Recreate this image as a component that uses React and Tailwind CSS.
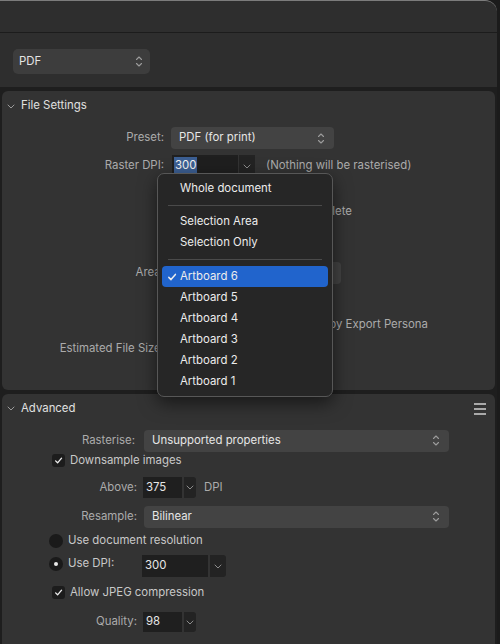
import React from 'react'

// up/down arrows for popup selects
const UpDown = () => (
  <svg width="8" height="13" viewBox="0 0 8 13" fill="none" stroke="#9c9c9c" strokeWidth="1.1" strokeLinecap="round" strokeLinejoin="round">
    <path d="M1.5 4.5 4 2l2.5 2.5" />
    <path d="M1.5 8.5 4 11l2.5-2.5" />
  </svg>
)

const Chev = () => (
  <svg width="8" height="5" viewBox="0 0 8 5" fill="none" stroke="#8c8c8c" strokeWidth="1" strokeLinecap="round" strokeLinejoin="round">
    <path d="M1 1l3 3 3-3" />
  </svg>
)

const Disclosure = () => (
  <svg width="8" height="5" viewBox="0 0 8 5" fill="none" stroke="#9a9a9a" strokeWidth="1" strokeLinecap="round" strokeLinejoin="round">
    <path d="M1 1l3 3 3-3" />
  </svg>
)

const Tick = ({ size = 9 }) => (
  <svg width={size} height={size} viewBox="0 0 10 10" fill="none" stroke="#ededed" strokeWidth="1.5" strokeLinecap="round" strokeLinejoin="round">
    <path d="M1.8 5.4 4 7.6 8.4 2.4" />
  </svg>
)

const Check = () => (
  <div className="flex h-[13px] w-[13px] items-center justify-center rounded-[3px] bg-[#1c1c1c]">
    <Tick />
  </div>
)

const Select = ({ value, className }) => (
  <div className={`flex h-[22px] items-center justify-between rounded-[4px] bg-[#434343] pl-[8px] pr-[9px] text-[#e6e6e6] ${className}`}>
    <span>{value}</span>
    <UpDown />
  </div>
)

const Artboards = ['Artboard 5', 'Artboard 4', 'Artboard 3', 'Artboard 2', 'Artboard 1']

export default function App() {
  return (
    <div className="relative h-[644px] w-[500px] overflow-hidden bg-[#1b1b1b] font-['Inter','Noto_Sans',sans-serif] text-[11.4px]">
      <div className="flex h-full w-[497px] flex-col rounded-tr-[12px] border-t border-[#7c7c7c] bg-[#2e2e2e]">
        {/* title band */}
        <div className="h-[32px] shrink-0 border-b border-[#1c1c1c]" />

        {/* format */}
        <div className="h-[54px] shrink-0 pl-[13px] pt-[16px]">
          <div className="flex h-[25px] w-[137px] items-center justify-between rounded-[5px] bg-[#3d3d3d] pl-[6px] pr-[7px] text-[#e4e4e4]">
            <span>PDF</span>
            <UpDown />
          </div>
        </div>

        <div className="flex flex-1 flex-col gap-[4px] bg-[#1e1e1e] px-[2px] pt-[4px]">
          {/* File Settings */}
          <div className="h-[299px] shrink-0 rounded-[6px] bg-[#333333]">
            <div className="flex h-[30px] items-center gap-[6px] pl-[5px] text-[#e0e0e0]">
              <Disclosure />
              <span>File Settings</span>
            </div>

            <div className="mt-[6px] flex h-[22px] items-center">
              <span className="w-[162px] text-right text-[#ababab]">Preset:</span>
              <Select value="PDF (for print)" className="ml-[7px] w-[163px]" />
            </div>

            <div className="mt-[6px] flex h-[22px] items-center">
              <span className="w-[162px] text-right text-[#ababab]">Raster DPI:</span>
              <div className="ml-[8px] flex h-[22px] w-[66px] items-center bg-[#1f1f1f] pl-[2px]">
                <span className="bg-[#3c5f93] px-[1px] text-[#f2f2f2]">300</span>
              </div>
              <div className="ml-[1px] flex h-[22px] w-[16px] items-center justify-center bg-[#232323]">
                <Chev />
              </div>
              <span className="ml-[11px] text-[#ababab]">(Nothing will be rasterised)</span>
            </div>

            <div className="mt-[27px] flex h-[16px] w-[350px] items-center justify-end whitespace-nowrap text-[#ababab]">
              <span>Include when incomplete</span>
            </div>

            <div className="mt-[42px] flex h-[21px] items-center">
              <span className="w-[162px] text-right text-[#ababab]">Area:</span>
              <Select value="" className="ml-[7px] h-[21px] w-[170px]" />
            </div>

            <div className="mt-[34px] flex h-[16px] w-[426px] items-center justify-end whitespace-nowrap text-[#ababab]">
              <span>Exclude layers hidden by Export Persona</span>
            </div>

            <div className="mt-[8px] flex h-[16px] items-center">
              <span className="w-[162px] text-right text-[#ababab]">Estimated File Size:</span>
            </div>
          </div>

          {/* Advanced */}
          <div className="flex-1 rounded-t-[6px] bg-[#333333]">
            <div className="flex h-[30px] items-center justify-between pl-[5px] pr-[9px] text-[#e0e0e0]">
              <div className="flex items-center gap-[6px]">
                <Disclosure />
                <span>Advanced</span>
              </div>
              <div className="flex w-[12px] flex-col gap-[3px]">
                <div className="h-[2px] bg-[#a9a9a9]" />
                <div className="h-[2px] bg-[#a9a9a9]" />
                <div className="h-[2px] bg-[#a9a9a9]" />
              </div>
            </div>

            <div className="mt-[6px] flex h-[21px] items-center">
              <span className="w-[133px] text-right text-[#ababab]">Rasterise:</span>
              <Select value="Unsupported properties" className="ml-[9px] h-[21px] w-[305px]" />
            </div>

            <div className="ml-[50px] mt-[3px] flex h-[13px] items-center gap-[5px] text-[#c8c8c8]">
              <Check />
              <span>Downsample images</span>
            </div>

            <div className="mt-[10px] flex h-[21px] items-center">
              <span className="w-[135px] text-right text-[#ababab]">Above:</span>
              <div className="ml-[6px] flex h-[21px] w-[39px] items-center bg-[#1f1f1f] pl-[3px] text-[#e6e6e6]">375</div>
              <div className="ml-[2px] flex h-[21px] w-[12px] items-center justify-center rounded-r-[3px] bg-[#232323]">
                <Chev />
              </div>
              <span className="ml-[8px] text-[#ababab]">DPI</span>
            </div>

            <div className="mt-[8px] flex h-[21px] items-center">
              <span className="w-[135px] text-right text-[#ababab]">Resample:</span>
              <Select value="Bilinear" className="ml-[7px] h-[21px] w-[305px]" />
            </div>

            <div className="ml-[47px] mt-[7px] flex h-[14px] items-center gap-[5px] text-[#c8c8c8]">
              <div className="h-[14px] w-[14px] rounded-full bg-[#1a1a1a]" />
              <span>Use document resolution</span>
            </div>

            <div className="ml-[47px] mt-[7px] flex h-[22px] items-start">
              <div className="mt-[2px] flex h-[14px] w-[93px] items-center gap-[5px] text-[#c8c8c8]">
                <div className="flex h-[14px] w-[14px] items-center justify-center rounded-full bg-[#1a1a1a]">
                  <div className="h-[4px] w-[4px] rounded-full bg-[#e8e8e8]" />
                </div>
                <span>Use DPI:</span>
              </div>
              <div className="flex h-[22px] w-[66px] items-center bg-[#1f1f1f] pl-[3px] text-[#e6e6e6]">300</div>
              <div className="ml-[2px] flex h-[22px] w-[16px] items-center justify-center rounded-r-[3px] bg-[#232323]">
                <Chev />
              </div>
            </div>

            <div className="ml-[50px] mt-[9px] flex h-[13px] items-center gap-[5px] text-[#c8c8c8]">
              <Check />
              <span>Allow JPEG compression</span>
            </div>

            <div className="mt-[13px] flex h-[20px] items-center">
              <span className="w-[135px] text-right text-[#ababab]">Quality:</span>
              <div className="ml-[6px] flex h-[20px] w-[39px] items-center bg-[#1f1f1f] pl-[3px] text-[#e6e6e6]">98</div>
              <div className="ml-[2px] flex h-[20px] w-[12px] items-center justify-center rounded-r-[3px] bg-[#232323]">
                <Chev />
              </div>
            </div>
          </div>
        </div>
      </div>

      {/* Area popup menu */}
      <div className="absolute left-[157px] top-[173px] w-[176px] rounded-[7px] border border-[#575757] bg-[#262626] pb-[4px] pt-[4px] text-[#ececec] shadow-[0_6px_18px_rgba(0,0,0,0.55)]">
        <div className="flex h-[21px] items-center pl-[22px]">Whole document</div>
        <div className="flex h-[12px] items-center px-[10px]">
          <div className="h-px w-full bg-[#4a4a4a]" />
        </div>
        <div className="flex h-[21px] items-center pl-[22px]">Selection Area</div>
        <div className="flex h-[21px] items-center pl-[22px]">Selection Only</div>
        <div className="flex h-[13px] items-center px-[10px]">
          <div className="h-px w-full bg-[#4a4a4a]" />
        </div>
        <div className="mx-[4px] flex h-[21px] items-center rounded-[4px] bg-[#2164cc] pl-[5px]">
          <Tick size={10} />
          <span className="ml-[3px]">Artboard 6</span>
        </div>
        {Artboards.map(a => (
          <div key={a} className="flex h-[21px] items-center pl-[22px]">{a}</div>
        ))}
      </div>
    </div>
  )
}
